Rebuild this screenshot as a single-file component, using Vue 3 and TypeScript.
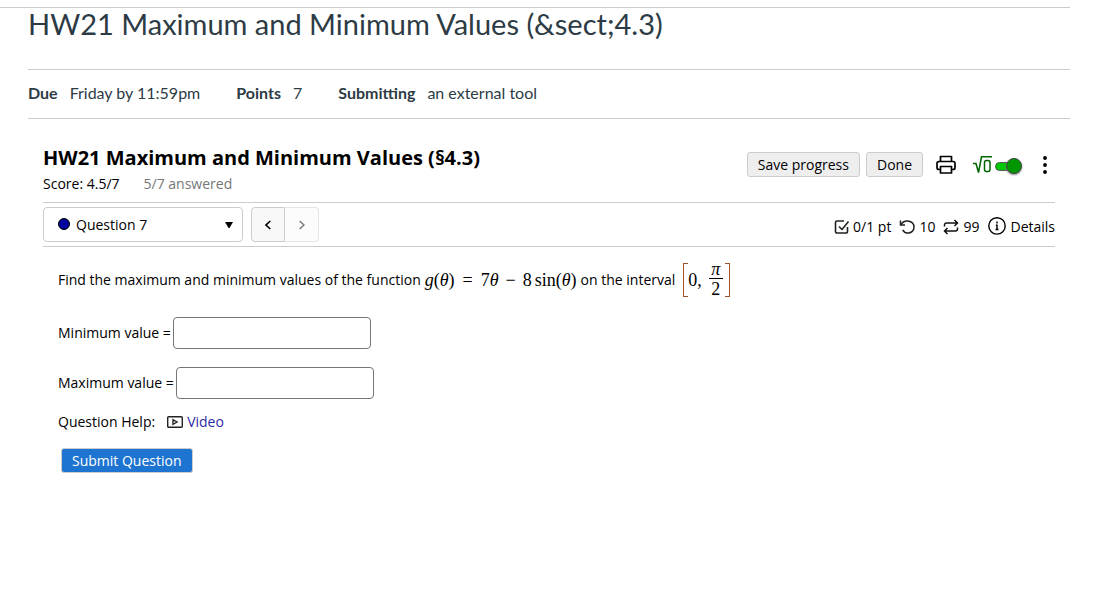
<script setup lang="ts">
import { ref } from 'vue'

interface Fact {
  label: string
  value: string
}

const facts: Fact[] = [
  { label: 'Due', value: 'Friday by 11:59pm' },
  { label: 'Points', value: '7' },
  { label: 'Submitting', value: 'an external tool' },
]

const questions: string[] = ['Question 1', 'Question 2', 'Question 3', 'Question 4', 'Question 5', 'Question 6', 'Question 7']
const current = ref('Question 7')
const mathEntry = ref(true)
const minimum = ref('')
const maximum = ref('')
</script>

<template>
  <main class="page">
    <header class="title-bar">
      <h1>HW21 Maximum and Minimum Values (&amp;sect;4.3)</h1>
    </header>
    <dl class="facts">
      <div v-for="fact in facts" :key="fact.label" class="fact">
        <dt>{{ fact.label }}</dt>
        <dd>{{ fact.value }}</dd>
      </div>
    </dl>

    <section class="tool">
      <div class="tool-head">
        <div class="tool-title">
          <h2>HW21 Maximum and Minimum Values (§4.3)</h2>
          <p class="score"><span>Score: 4.5/7</span><span class="muted">5/7 answered</span></p>
        </div>
        <div class="actions">
          <button type="button" class="plain">Save progress</button>
          <button type="button" class="plain">Done</button>
          <button type="button" class="icon-button print" aria-label="Print">
            <svg width="20" height="20" viewBox="0 0 20 20" fill="none" stroke="#000" stroke-width="1.7" stroke-linejoin="round">
              <path d="M4.5 6V1.5h11V6" />
              <path d="M4.500 14.500H3a2 2 0 0 1-2-2V8.500a2 2 0 0 1 2-2h14a2 2 0 0 1 2 2v4a2 2 0 0 1-2 2h-1.500" />
              <path d="M4.500 11.500h11v6.500h-11z" />
            </svg>
          </button>
          <label class="math-toggle">
            <svg width="20" height="20" viewBox="0 0 20 20" fill="none" stroke="#006400" stroke-width="1.5" aria-hidden="true">
              <path d="M0 8.500h3l2.500 9L8.500 1.800H19" />
              <rect x="11.500" y="5.500" width="5.500" height="11" rx="2" />
            </svg>
            <input v-model="mathEntry" type="checkbox" role="switch" aria-label="Equation editor" />
          </label>
          <button type="button" class="icon-button more" aria-label="More options">
            <svg width="4" height="18" viewBox="0 0 4 18">
              <circle cx="2" cy="2" r="1.900" /><circle cx="2" cy="9" r="1.900" /><circle cx="2" cy="16" r="1.900" />
            </svg>
          </button>
        </div>
      </div>

      <div class="nav-row">
        <div class="nav-left">
          <div class="picker">
            <select v-model="current" aria-label="Question">
              <option v-for="q in questions" :key="q">{{ q }}</option>
            </select>
            <svg class="dot" width="12" height="12" viewBox="0 0 12 12"><circle cx="6" cy="6" r="5.500" fill="#00009c" stroke="#000" /></svg>
            <svg class="caret" width="8" height="6" viewBox="0 0 8 6"><path d="M0 0h8L4.500 6h-1z" /></svg>
          </div>
          <div class="pager">
            <button type="button" aria-label="Previous question">
              <svg width="6" height="10" viewBox="0 0 6 10" fill="none" stroke="#000" stroke-width="1.600"><path d="M5.300 1L1 5l4.300 4" /></svg>
            </button>
            <button type="button" disabled aria-label="Next question">
              <svg width="6" height="10" viewBox="0 0 6 10" fill="none" stroke="#777" stroke-width="1.400"><path d="M.7 1L5 5 .7 9" /></svg>
            </button>
          </div>
        </div>
        <div class="stats">
          <span class="stat">
            <svg width="16" height="16" viewBox="0 0 16 16" fill="none" stroke="#222" stroke-width="1.600" stroke-linejoin="round">
              <path d="M10 2H3a1.500 1.500 0 0 0-1.500 1.500v9A1.500 1.500 0 0 0 3 14h9a1.500 1.500 0 0 0 1.500-1.500V8" />
              <path d="M5 7.500l3 3L14.500 2.500" />
            </svg>
            0/1 pt
          </span>
          <span class="stat wide">
            <svg width="16" height="16" viewBox="0 0 16 16" fill="none" stroke="#222" stroke-width="1.500">
              <path d="M1.500 1.500v4.500H6" />
              <path d="M1.800 6C3.500 2.800 6.200 1.700 9 2c3.500.5 6 3 6 6.200 0 3.300-2.700 5.800-6 5.800-2.300 0-4.300-1.200-5.300-3.200" />
            </svg>
            10
          </span>
          <span class="stat wide">
            <svg width="16" height="16" viewBox="0 0 16 16" fill="none" stroke="#111" stroke-width="1.500">
              <path d="M1.500 7.500V6a2 2 0 0 1 2-2H14M11.500 1L14.500 4l-3 3" />
              <path d="M14.500 8.500V10a2 2 0 0 1-2 2H2M4.500 9l-3 3 3 3" />
            </svg>
            99
          </span>
          <button type="button" class="details">
            <svg width="20" height="20" viewBox="0 0 20 20" fill="none" stroke="#000" stroke-width="1.400">
              <circle cx="10" cy="8.900" r="8.200" />
              <path d="M10 4.500v2M8.800 8.200H10v4.300M8.500 12.500h3" />
            </svg>
            Details
          </button>
        </div>
      </div>

      <form class="question" @submit.prevent>
        <p class="prompt">
          <span>Find the maximum and minimum values of the function</span>
          <span class="math"><i>g</i>(<i>θ</i>)<span class="rel">=</span>7<i>θ</i><span class="op">−</span>8<span class="fn">sin</span>(<i>θ</i>)</span>
          <span>on the interval</span>
          <span class="math interval">
            <span class="bracket left"></span>
            <span class="zero">0,</span>
            <span class="fraction"><i>π</i><span class="denominator">2</span></span>
            <span class="bracket right"></span>
          </span>
        </p>
        <div class="answer">
          <label for="minimum">Minimum value =</label>
          <input id="minimum" v-model="minimum" type="text" />
        </div>
        <div class="answer">
          <label for="maximum">Maximum value =</label>
          <input id="maximum" v-model="maximum" type="text" />
        </div>
        <p class="help">
          <span>Question Help:</span>
          <a href="#video">
            <svg width="16" height="12" viewBox="0 0 16 12" fill="none" stroke="#222" stroke-width="1.400">
              <rect x=".7" y=".7" width="14.600" height="10.600" rx="1" />
              <path d="M6 3.700v4.600L10 6z" />
            </svg>
            Video
          </a>
        </p>
        <button type="submit" class="submit">Submit Question</button>
      </form>
    </section>
  </main>
</template>

<style>
body {
  margin: 0;
  background: #fff;
}
</style>

<style scoped>
.page {
  box-sizing: border-box;
  padding: 7px 24px 24px 0;
  font-family: Lato, sans-serif;
  color: #2d3b45;
}
.title-bar {
  border-top: 1px solid #c7cdd1;
  padding-left: 28px;
}
h1 {
  margin: 0;
  padding-bottom: 29px;
  font-size: 29px;
  font-weight: 400;
  line-height: 32px;
}
.facts {
  display: flex;
  gap: 36px;
  margin: 0 0 0 28px;
  padding: 11px 0 13px;
  border: solid #c7cdd1;
  border-width: 1px 0;
  font-size: 16px;
  line-height: 24px;
}
.fact {
  display: flex;
  gap: 12px;
}
dt {
  font-weight: 700;
}
dd {
  margin: 0;
}
.tool {
  margin: 25px 15px 0 43px;
  font-family: "Trebuchet MS", "Open Sans", sans-serif;
  font-size: 14px;
  line-height: 20px;
  color: #000;
}
.tool-head {
  display: flex;
  justify-content: space-between;
  align-items: flex-start;
  padding-bottom: 8px;
}
h2 {
  margin: 0;
  padding-bottom: 2px;
  font-size: 20px;
  font-weight: 700;
  line-height: 28px;
}
.score {
  display: flex;
  gap: 24px;
  margin: 0;
}
.muted {
  color: #767676;
}
button,
input,
select {
  font: inherit;
  color: inherit;
}
.actions {
  display: flex;
  align-items: center;
  gap: 6px;
  padding: 8px 8px 0 0;
}
.plain {
  height: 25px;
  padding: 0 10px;
  border: 1px solid #ccc;
  border-radius: 3px;
  background: #eee;
  line-height: 20px;
}
.icon-button {
  display: flex;
  padding: 0;
  border: 0;
  background: none;
}
.print {
  margin: 0 11px 0 7px;
}
.more {
  margin-left: 16px;
}
.math-toggle {
  display: flex;
  align-items: center;
  gap: 2px;
}
.math-toggle input {
  appearance: none;
  display: flex;
  align-items: center;
  box-sizing: border-box;
  width: 26px;
  height: 9px;
  margin: 3px 0 0;
  border: 1px solid #555;
  border-radius: 5px;
  background: #00c800;
}
.math-toggle input::before {
  content: "";
  box-sizing: border-box;
  flex: none;
  width: 16px;
  height: 16px;
  margin-left: 10px;
  border: 1px solid #444;
  border-radius: 50%;
  background: #009600;
  box-shadow: 0 1px 2px #888;
}
.nav-row {
  display: flex;
  justify-content: space-between;
  align-items: center;
  padding: 4px 0;
  border: solid #ccc;
  border-width: 1px 0;
}
.nav-left {
  display: flex;
  gap: 8px;
}
.picker {
  position: relative;
}
.picker select {
  appearance: none;
  box-sizing: border-box;
  width: 200px;
  height: 35px;
  padding: 0 24px 0 32px;
  border: 1px solid #ccc;
  border-radius: 4px;
  background: #fff;
}
.dot,
.caret {
  position: absolute;
  top: 11px;
  left: 15px;
  pointer-events: none;
}
.caret {
  top: 15px;
  left: auto;
  right: 10px;
}
.pager {
  display: flex;
}
.pager button {
  display: flex;
  align-items: center;
  justify-content: center;
  box-sizing: border-box;
  width: 34px;
  height: 35px;
  padding: 0;
  border: 1px solid #ccc;
  border-radius: 4px 0 0 4px;
  background: #f8f8f8;
}
.pager button:disabled {
  border-color: #e4e4e4;
  border-left: 0;
  border-radius: 0 4px 4px 0;
  background: #fcfcfc;
}
.stats {
  display: flex;
  align-items: center;
  gap: 8px;
  padding-top: 4px;
}
.stat,
.details {
  display: flex;
  align-items: center;
  gap: 3px;
}
.wide {
  gap: 4px;
}
.details {
  padding: 0;
  border: 0;
  background: none;
}
.question {
  padding: 14px 15px 0;
}
.prompt {
  display: flex;
  flex-wrap: wrap;
  align-items: center;
  gap: 4px;
  margin: 0 0 19px;
}
.math {
  font-family: "Liberation Serif", serif;
  font-size: 18px;
  white-space: nowrap;
}
.rel {
  margin: 0 8px;
}
.op {
  margin: 0 7px;
}
.fn {
  margin-left: 3px;
}
.interval {
  display: flex;
  align-items: center;
  margin-left: 4px;
}
.bracket {
  width: 4px;
  height: 32px;
  border: 1px solid #a0522d;
}
.left {
  border-right: 0;
}
.right {
  border-left: 0;
  margin-left: 2px;
}
.zero {
  margin-right: 7px;
}
.fraction {
  display: flex;
  flex-direction: column;
  align-items: center;
  width: 14px;
  line-height: 17px;
}
.denominator {
  width: 100%;
  padding-top: 2px;
  border-top: 1px solid #000;
  text-align: center;
}
.answer {
  display: flex;
  align-items: center;
  gap: 2px;
  margin-bottom: 18px;
}
.answer input {
  box-sizing: border-box;
  width: 198px;
  height: 32px;
  padding: 0 8px;
  border: 1px solid #767676;
  border-radius: 4px;
  background: #fff;
}
.help {
  display: flex;
  gap: 12px;
  margin: -5px 0 16px;
}
.help a {
  display: flex;
  align-items: center;
  gap: 4px;
  color: #2d2aa5;
  text-decoration: none;
}
.submit {
  height: 25px;
  margin-left: 3px;
  padding: 0 10px;
  border: 1px solid #ccc;
  border-radius: 3px;
  background: #1e74d1;
  color: #fff;
  line-height: 20px;
}
</style>
